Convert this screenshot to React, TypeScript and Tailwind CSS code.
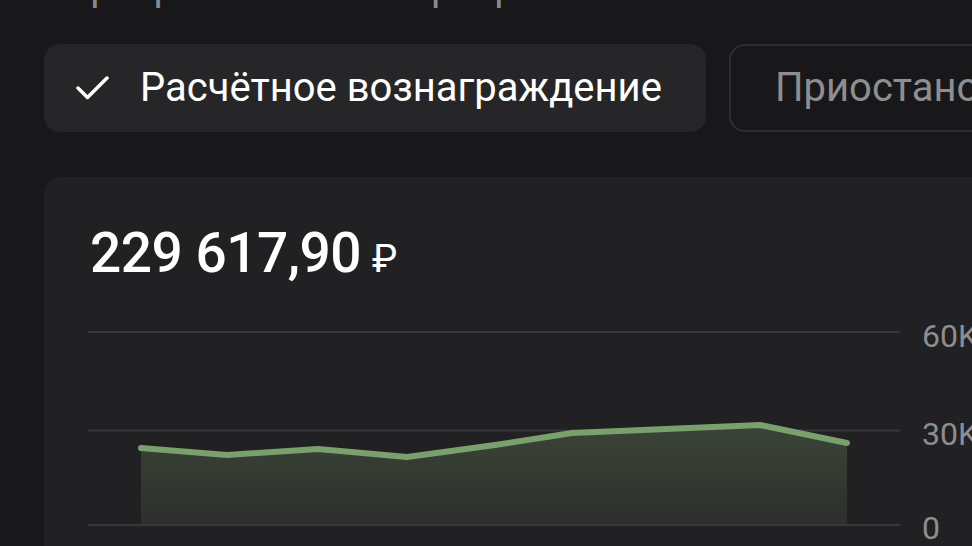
import React from "react";

const pts: [number, number][] = [
  [141, 448],
  [227, 455],
  [318, 449],
  [407, 457],
  [495, 445],
  [572, 433],
  [760, 425],
  [847, 443],
];

function Chart() {
  const ox = 88;
  const oy = 316;
  const p = pts.map(([x, y]) => [x - ox, y - oy] as [number, number]);
  const line = p.map(([x, y], i) => `${i === 0 ? "M" : "L"}${x} ${y}`).join(" ");
  const area = `${line} L${p[p.length - 1][0]} ${525 - oy} L${p[0][0]} ${525 - oy} Z`;
  return (
    <svg width="812" height="230" viewBox="0 0 812 230" className="block shrink-0">
      <defs>
        <linearGradient id="fillg" x1="0" y1="0" x2="0" y2="1">
          <stop offset="0" stopColor="#3b4437" />
          <stop offset="1" stopColor="#2d2f2c" />
        </linearGradient>
      </defs>
      <line x1="0" x2="812" y1={332 - oy} y2={332 - oy} stroke="#38383b" strokeWidth="2" />
      <line x1="0" x2="812" y1={430.5 - oy} y2={430.5 - oy} stroke="#38383b" strokeWidth="2" />
      <path d={area} fill="url(#fillg)" />
      <line x1="0" x2="812" y1={525 - oy} y2={525 - oy} stroke="#38383b" strokeWidth="2" />
      <path d={line} fill="none" stroke="#79a06d" strokeWidth="6" strokeLinejoin="round" strokeLinecap="round" />
    </svg>
  );
}

export default function App() {
  return (
    <div
      className="h-[546px] w-[972px] overflow-hidden bg-[#18181a] pl-[44px]"
      style={{ fontFamily: "Roboto, 'Noto Sans', sans-serif" }}
    >
      <div className="mt-[-33px] h-[77px] whitespace-nowrap pl-[4px] text-[40px] leading-[40px] text-[#8a8a8c]">
        1 февраля 2025 – 9 февраля 2025
      </div>
      <div className="flex gap-[23px] whitespace-nowrap">
        <div className="flex h-[88px] w-[662px] shrink-0 items-center rounded-[16px] bg-[#262628] pl-[32px]">
          <svg width="34" height="26" viewBox="0 0 34 26" className="mr-[30px] shrink-0">
            <path d="M2 13 L11.5 22.5 L31 3" fill="none" stroke="#ffffff" strokeWidth="3.5" strokeLinecap="round" strokeLinejoin="round" />
          </svg>
          <span className="text-[40px] leading-none text-white">Расчётное вознаграждение</span>
        </div>
        <div className="flex h-[88px] w-[420px] shrink-0 items-center rounded-[16px] border-2 border-[#2e2e31] pl-[44px]">
          <span className="text-[40px] leading-none text-[#8e8e90]">Приостановленные</span>
        </div>
      </div>
      <div className="mt-[45px] h-[400px] w-[960px] rounded-tl-[16px] bg-[#212123] pl-[44px] pt-[50px]">
        <div className="flex items-baseline whitespace-nowrap pl-[2px]">
          <span className="text-[55px] font-medium leading-[52px] tracking-[-0.5px] text-white">229 617,90</span>
          <span className="ml-[11px] text-[38px] font-normal leading-none text-white">₽</span>
        </div>
        <div className="mt-[37px] flex">
          <Chart />
          <div className="ml-[22px] flex h-[230px] flex-col text-[32px] leading-none text-[#8e8e90]">
            <span className="mt-[4px]">60K</span>
            <span className="mt-[66px]">30K</span>
            <span className="mt-[62px]">0</span>
          </div>
        </div>
      </div>
    </div>
  );
}
